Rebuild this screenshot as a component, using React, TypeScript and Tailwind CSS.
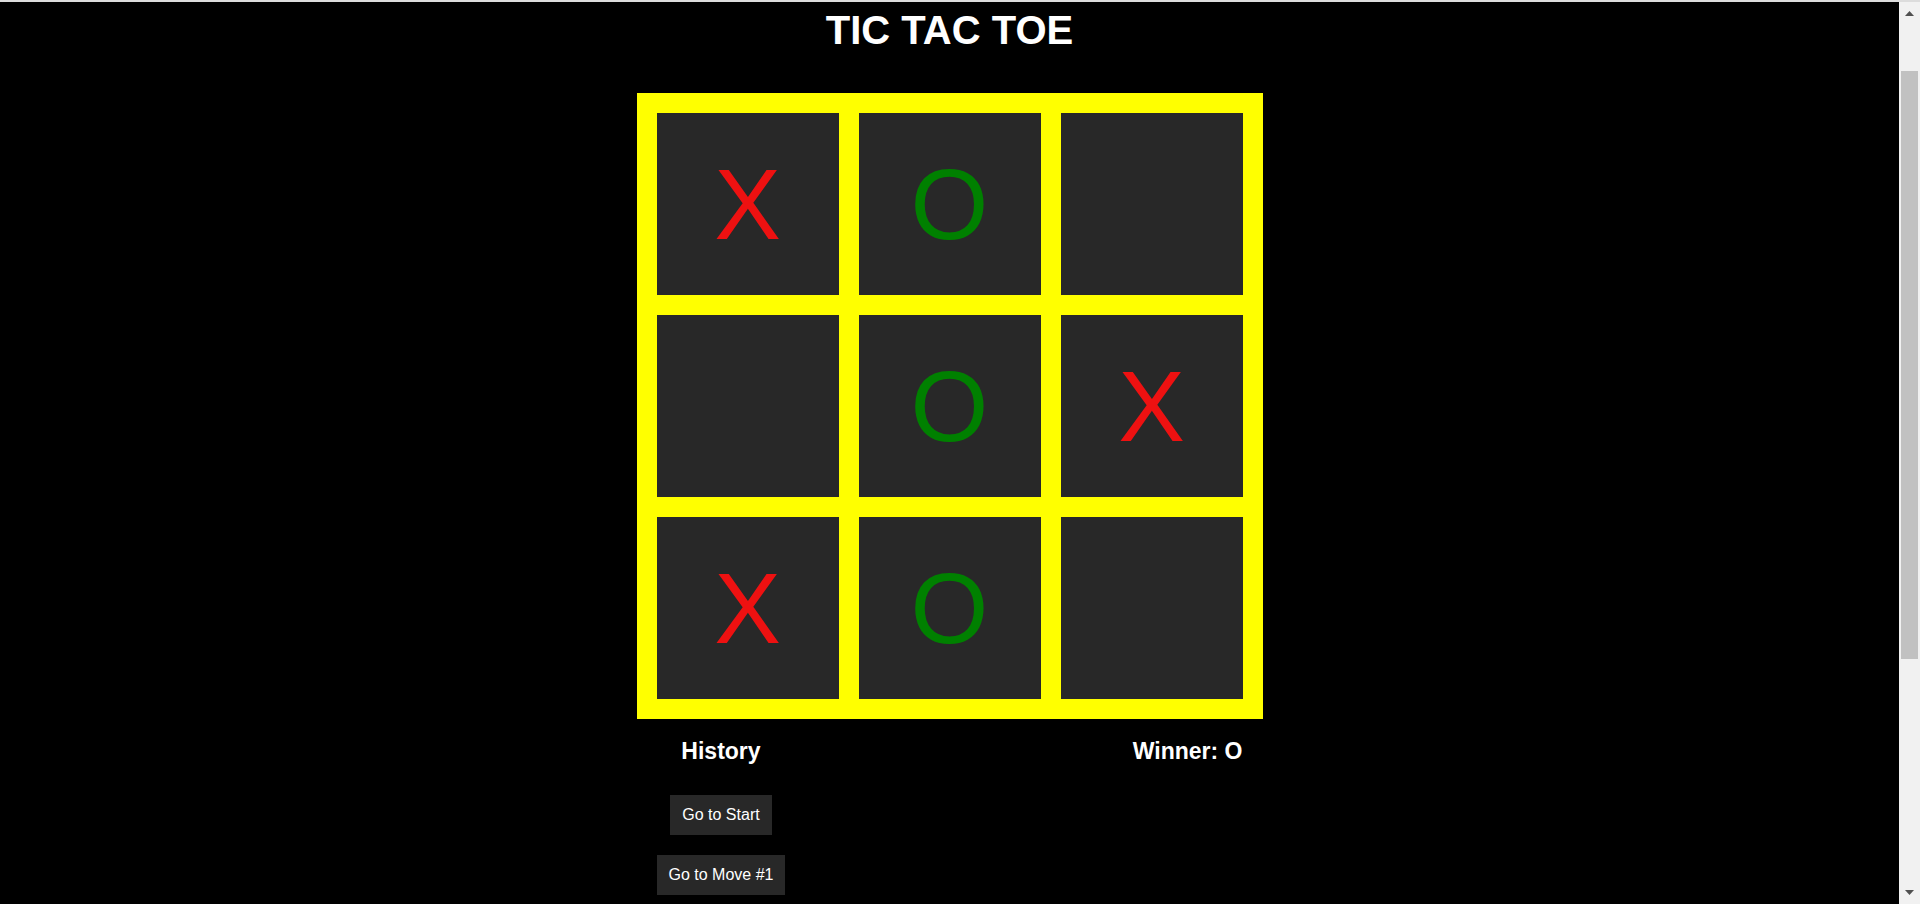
type Mark = "X" | "O" | null;

const board: Mark[] = ["X", "O", null, null, "O", "X", "X", "O", null];

const moves = ["Go to Start", "Go to Move #1"];

function Square({ value }: { value: Mark }) {
  return (
    <div className="flex h-[182px] w-[182px] items-center justify-center bg-[#282828] text-[100px] leading-[115px]">
      {value === "X" && <span className="text-[#ee1111]">X</span>}
      {value === "O" && <span className="text-[#008000]">O</span>}
    </div>
  );
}

// the page in the shot is scrolled a little and shows the classic scrollbar
function Scrollbar() {
  return (
    <div className="flex w-[21px] shrink-0 flex-col items-center bg-[#f1f1f1]">
      <svg width="9" height="5" viewBox="0 0 9 5" className="mt-[9px]">
        <polygon points="4.5,0 9,5 0,5" fill="#505050" />
      </svg>
      <div className="mt-[55px] h-[588px] w-[17px] bg-[#c1c1c1]" />
      <div className="flex-1" />
      <svg width="9" height="5" viewBox="0 0 9 5" className="mb-[9px]">
        <polygon points="0,0 9,0 4.5,5" fill="#505050" />
      </svg>
    </div>
  );
}

export default function App() {
  return (
    <div className="flex h-screen flex-col overflow-hidden border-t-2 border-[#dcdcdc] bg-black font-['Liberation_Sans',Arial,sans-serif] text-white">
      <div className="flex min-h-0 flex-1">
        <main className="min-w-0 flex-1">
          <h1 className="mt-[5px] text-center text-[40px] font-bold leading-[46px]">TIC TAC TOE</h1>

          <div className="mx-auto mt-10 w-[626px]">
            <div className="grid grid-cols-3 gap-5 bg-[#ffff00] p-5">
              {board.map((value, i) => (
                <Square key={i} value={value} />
              ))}
            </div>

            <div className="mt-[19px] flex items-start justify-between px-5">
              <div className="flex flex-col items-center">
                <h2 className="text-[23px] font-bold leading-[26px]">History</h2>
                <div className="mt-[31px] flex flex-col items-center gap-5">
                  {moves.map((label) => (
                    <button
                      key={label}
                      className="bg-[#282828] px-3 py-[11px] text-base leading-[18px] text-white"
                    >
                      {label}
                    </button>
                  ))}
                </div>
              </div>
              <h2 className="text-[23px] font-bold leading-[26px]">Winner: O</h2>
            </div>
          </div>
        </main>
        <Scrollbar />
      </div>
    </div>
  );
}
